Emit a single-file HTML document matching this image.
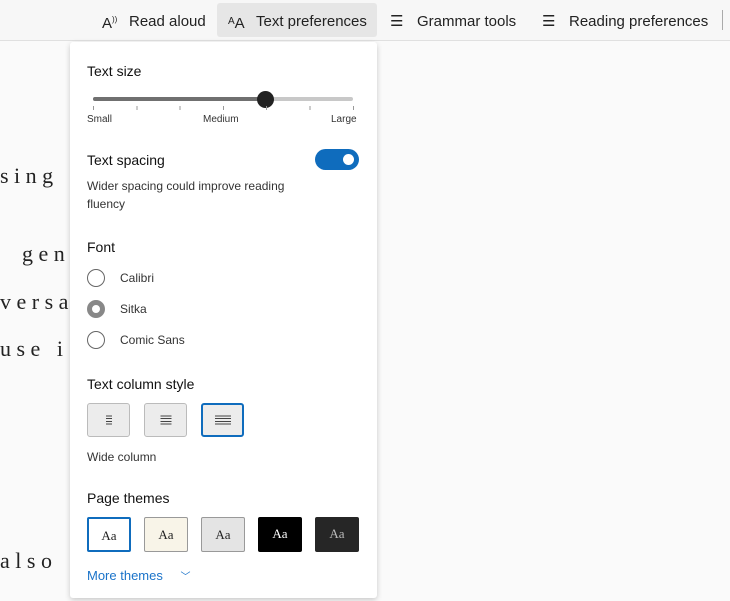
<!DOCTYPE html><html><head><style>
body{margin:0;width:730px;height:601px;background:#fafafa;font-family:"Liberation Sans",sans-serif;position:relative;overflow:hidden}
.tb{position:absolute;left:0;top:0;width:730px;height:40px;background:#f7f7f7;border-bottom:1px solid #e0e0e0}
.tbi{position:absolute;top:3px;height:34px;line-height:38px;font-size:15px;color:#222;white-space:nowrap}
.ic{position:absolute;top:0;font-size:15px}
.bg{position:absolute;font-family:"Liberation Serif",serif;font-size:22px;letter-spacing:5.5px;color:#222}
.p{position:absolute;left:70px;top:42px;width:307px;height:556px;background:#fff;box-shadow:0 2px 6px rgba(0,0,0,.2);border-radius:3px}
.h{position:absolute;left:17px;font-size:14px;color:#111}
.s{position:absolute;font-size:12px;color:#333}
.r{position:absolute;left:17px;width:18px;height:18px;border:1.5px solid #666;border-radius:50%;box-sizing:border-box}
.cb{position:absolute;top:361px;width:43px;height:34px;background:#ececec;border:1px solid #bbb;border-radius:3px;box-sizing:border-box}
.cb i{position:absolute;left:50%;top:50%;transform:translate(-50%,-50%);height:9px;background:repeating-linear-gradient(#444 0 1px,transparent 1px 2.7px)}
.th{position:absolute;top:475px;width:44px;height:35px;border-radius:2px;box-sizing:border-box;text-align:center;line-height:33px;font-family:"Liberation Serif",serif;font-size:13px}
</style></head><body>
<div class="tb">
<div class="tbi" style="left:102px;padding-left:27px"><span class="ic" style="left:0;top:-2px">A<sup style="font-size:8px">))</sup></span>Read aloud</div>
<div class="tbi" style="left:217px;width:160px;background:#e6e6e6;border-radius:3px;padding-left:39px;box-sizing:border-box"><span class="ic" style="left:11px"><span style="font-size:10px;vertical-align:4px">A</span>A</span>Text preferences</div>
<div class="tbi" style="left:390px;padding-left:27px"><span class="ic" style="left:0">☰</span>Grammar tools</div>
<div class="tbi" style="left:542px;padding-left:27px"><span class="ic" style="left:0">☰</span>Reading preferences</div>
<div style="position:absolute;left:722px;top:10px;width:1px;height:20px;background:#aaa"></div>
</div>
<div class="bg" style="left:0;top:163px">sing</div>
<div class="bg" style="left:22px;top:241px">gen</div>
<div class="bg" style="left:0;top:289px">versa</div>
<div class="bg" style="left:0;top:336px">use i</div>
<div class="bg" style="left:0;top:548px">also</div>
<div class="p">
<div class="h" style="top:21px">Text size</div>
<div style="position:absolute;left:23px;top:55px;width:260px;height:4px;background:#c8c8c8;border-radius:2px"></div>
<div style="position:absolute;left:23px;top:55px;width:173px;height:4px;background:#707070;border-radius:2px"></div>
<div style="position:absolute;left:187px;top:49px;width:17px;height:17px;background:#222;border-radius:50%"></div>
<div style="position:absolute;left:23px;top:64px;width:262px;height:4px;background:repeating-linear-gradient(90deg,#999 0 1px,transparent 1px 43.3px)"></div>
<div class="s" style="left:17px;top:72px;font-size:10px">Small</div>
<div class="s" style="left:133px;top:72px;font-size:10px">Medium</div>
<div class="s" style="left:261px;top:72px;font-size:10px">Large</div>
<div class="h" style="top:110px">Text spacing</div>
<div style="position:absolute;left:245px;top:107px;width:44px;height:21px;background:#0f6cbd;border-radius:11px"><div style="position:absolute;right:5px;top:5px;width:11px;height:11px;background:#fff;border-radius:50%"></div></div>
<div class="s" style="left:17px;top:135px;line-height:18px;width:230px">Wider spacing could improve reading fluency</div>
<div class="h" style="top:197px">Font</div>
<div class="r" style="top:227px"></div><div class="s" style="left:50px;top:229px">Calibri</div>
<div class="r" style="top:258px;border:5px solid #888"></div><div class="s" style="left:50px;top:260px">Sitka</div>
<div class="r" style="top:289px"></div><div class="s" style="left:50px;top:291px">Comic Sans</div>
<div class="h" style="top:334px">Text column style</div>
<div class="cb" style="left:17px"><i style="width:6px"></i></div>
<div class="cb" style="left:74px"><i style="width:11px"></i></div>
<div class="cb" style="left:131px;border:2px solid #0f6cbd"><i style="width:16px"></i></div>
<div class="s" style="left:17px;top:408px">Wide column</div>
<div class="h" style="top:448px">Page themes</div>
<div class="th" style="left:17px;border:2px solid #0f6cbd;background:#fff;color:#222">Aa</div>
<div class="th" style="left:74px;border:1px solid #999;background:#f8f4e8;color:#222">Aa</div>
<div class="th" style="left:131px;border:1px solid #999;background:#e4e4e4;color:#222">Aa</div>
<div class="th" style="left:188px;background:#000;color:#fff">Aa</div>
<div class="th" style="left:245px;background:#262626;color:#bbb">Aa</div>
<div class="s" style="left:17px;top:526px;color:#1a73c9;font-size:13px">More themes <span style="margin-left:14px;font-size:10px">﹀</span></div>
</div>
</body></html>
